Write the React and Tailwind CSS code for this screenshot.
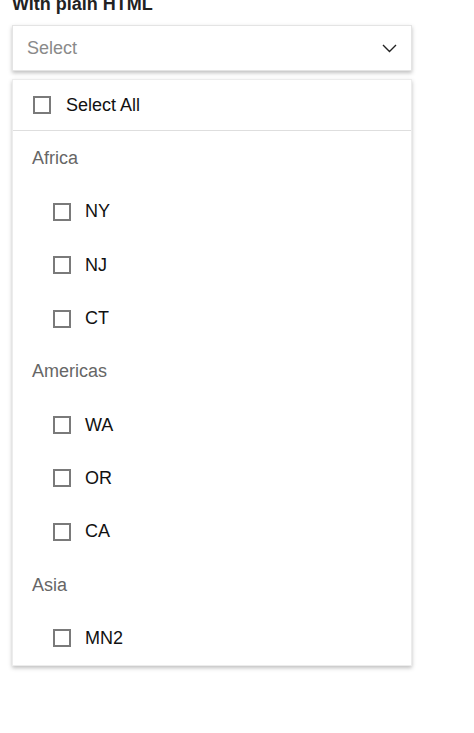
import React from 'react';

const groups = [
  { label: 'Africa', items: ['NY', 'NJ', 'CT'] },
  { label: 'Americas', items: ['WA', 'OR', 'CA'] },
  { label: 'Asia', items: ['MN2'] },
];

const Box = () => (
  <span className="w-[18px] h-[18px] border-2 border-[#7a7a7a] bg-white shrink-0" />
);

const App = () => {
  return (
    <div className="min-h-screen bg-white font-['Liberation_Sans',Arial,sans-serif] text-[18px] overflow-hidden">
      <div className="pl-3 -mt-[6px] h-5 leading-5 font-bold text-[#222] mb-[11px]">With plain HTML</div>

      <div className="ml-3 w-[400px] h-[46px] bg-white border border-[#e4e4e4] shadow-[0_2px_4px_rgba(0,0,0,0.25)] flex items-center justify-between pl-[14px] pr-[14px]">
        <span className="text-[#8a8a8a] mt-[1px]">Select</span>
        <svg width="15" height="9" viewBox="0 0 15 9" fill="none">
          <path d="M1 1l6.5 6.5L14 1" stroke="#222" strokeWidth="1.4" />
        </svg>
      </div>

      <div className="ml-3 mt-2 w-[400px] bg-white border border-[#ececec] shadow-[0_2px_4px_rgba(0,0,0,0.25)]">
        <div className="h-[51px] flex items-center gap-[15px] pl-[20px] border-b border-[#dedede]">
          <Box />
          <span className="text-[#111]">Select All</span>
        </div>
        <div className="pt-[1px]">
          {groups.map((g) => (
            <div key={g.label}>
              <div className="h-[53.3px] flex items-center pl-[19px] text-[#666]">{g.label}</div>
              {g.items.map((it) => (
                <div key={it} className="h-[53.3px] flex items-center gap-[14px] pl-[40px]">
                  <Box />
                  <span className="text-[#111]">{it}</span>
                </div>
              ))}
            </div>
          ))}
        </div>
      </div>
    </div>
  );
};

export default App;
